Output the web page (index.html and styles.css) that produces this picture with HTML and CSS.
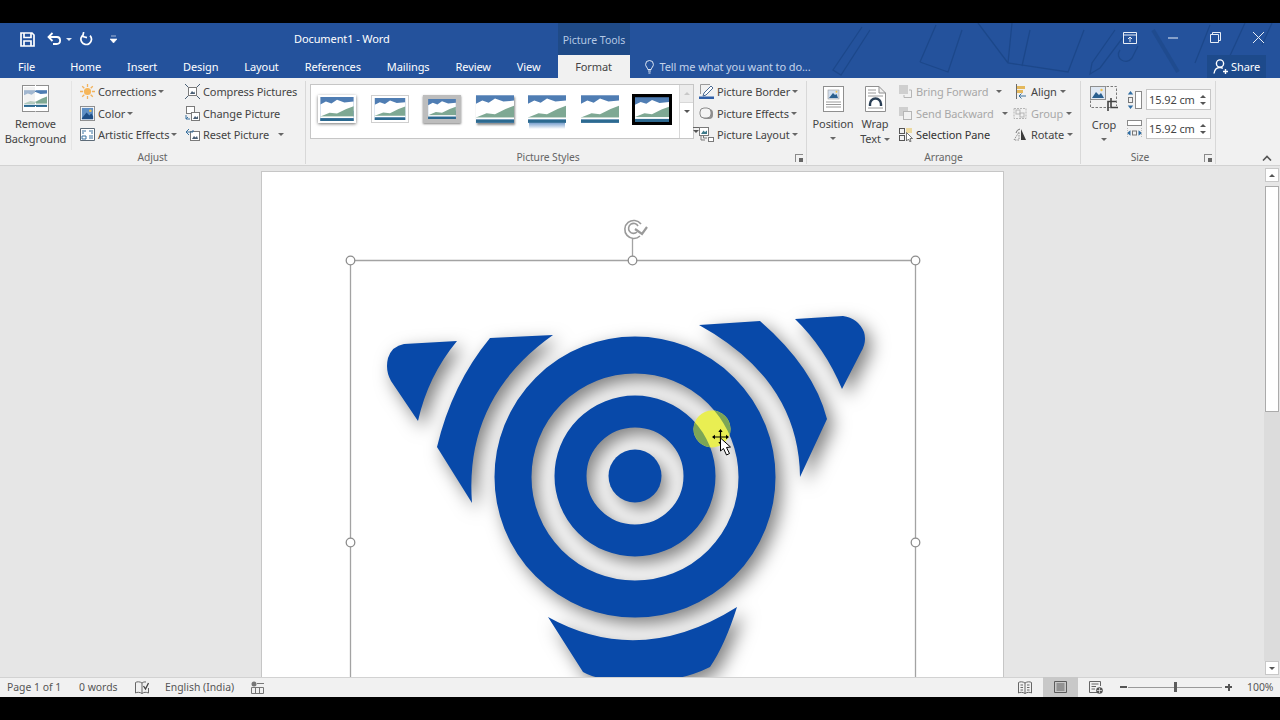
FILE: index.html
```html
<!DOCTYPE html>
<html lang="en">
<head>
  <meta charset="UTF-8" />
  <title>Document1 - Word</title>
  <link rel="stylesheet" href="styles.css">
</head>
<body>

  <svg class="sprite" xmlns="http://www.w3.org/2000/svg">
    <symbol id="pic" viewBox="0 0 36 26">
      <rect width="36" height="26" fill="#4f7db3"/>
      <path d="M0 8 L6 5 L12 7 L18 3 L26 6 L36 5 V15 L24 18 L12 20 L0 22Z" fill="#fff"/>
      <path d="M0 21 L10 17 L18 18 L28 13 L36 10 V22 H0Z" fill="#7ea893"/>
      <rect y="21" width="36" height="2" fill="#fff"/>
      <rect y="23" width="36" height="3" fill="#2c6a90"/>
    </symbol>
    <symbol id="mini" viewBox="0 0 16 16">
      <rect x=".5" y=".5" width="15" height="15" fill="#fff" stroke="#8a8a8a"/>
      <rect x="2" y="2" width="12" height="12" fill="#5f8fc4"/>
      <path d="M2 13 L7 7 L10 10 L12 8 L14 11 V14 H2Z" fill="#1f4e86"/>
      <circle cx="11" cy="5" r="1.4" fill="#f2c14e"/>
    </symbol>
  </svg>

  <div class="letterbox"></div>

  <div class="chrome">
    <svg class="doodles" width="480" height="55" viewBox="800 23 480 55">
      <g fill="none" stroke="#17417f" stroke-width="1.3" opacity=".6">
        <path d="M862 27 L833 70 L841 75 L870 30"/>
        <path d="M920 62 L936 25 M920 62 L948 72 L962 30"/>
        <path d="M978 23 L1008 63 M1012 23 L1008 63 L1068 72 L1084 30"/>
        <path d="M1030 30 L1022 66"/>
        <path d="M1115 30 L1092 63 L1090 74 L1100 68 L1124 36"/>
        <path d="M1120 50 C1114 58 1126 66 1132 58 L1138 46"/>
        <path d="M1153 30 L1178 72" stroke-width="4" stroke="#1c4788"/>
        <path d="M1195 63 L1210 25 M1245 23 L1228 60 M1272 23 L1262 45"/>
      </g>
    </svg>
    <header class="titlebar">
      <div class="qat">
        <svg class="qat-ico" width="15" height="15" viewBox="0 0 15 15"><path d="M1 1 H12 L14 3 V14 H1Z M4 1.5 V5.5 H11 V1.5 M4 14 V9 H11 V14" fill="none" stroke="#fff" stroke-width="1.7"/></svg>
        <svg class="qat-ico undo" width="16" height="15" viewBox="0 0 16 15"><path d="M2 5 H10 C14 5 14.5 12 9.5 12 H6 M5.5 1 L1.5 5 L5.5 9" fill="none" stroke="#fff" stroke-width="1.8"/></svg>
        <span class="caret white"></span>
        <svg class="qat-ico redo" width="15" height="15" viewBox="0 0 15 15"><path d="M10 2.8 A5.3 5.3 0 1 1 4 3 M3 1 V5.5 H7.5" fill="none" stroke="#fff" stroke-width="1.7" transform="rotate(14 7.5 7.5)"/></svg>
        <svg class="qat-ico more" width="7" height="8" viewBox="0 0 7 8"><path d="M1 1 H6 M0 4 H7 L3.5 8Z" fill="#fff" stroke="#fff" stroke-width=".6"/></svg>
      </div>
      <div class="doc-title">Document1 - Word</div>
      <div class="context-title">Picture Tools</div>
      <div class="win-controls">
        <span class="win-btn"><svg width="14" height="12" viewBox="0 0 14 12"><path d="M.5 .5 H13.5 V11.5 H.5Z M.5 3 H13.5 M7 10 V5 M5 7 L7 5 L9 7" fill="none" stroke="#e8eef7"/></svg></span>
        <span class="win-btn"><svg width="10" height="10" viewBox="0 0 10 10"><path d="M0 5 H10" stroke="#e8eef7"/></svg></span>
        <span class="win-btn"><svg width="11" height="11" viewBox="0 0 11 11"><path d="M.5 2.5 H8.5 V10.5 H.5Z M2.5 2.5 V.5 H10.5 V8.5 H8.5" fill="none" stroke="#e8eef7"/></svg></span>
        <span class="win-btn"><svg width="11" height="11" viewBox="0 0 11 11"><path d="M0 0 L11 11 M11 0 L0 11" stroke="#e8eef7"/></svg></span>
      </div>
    </header>

    <nav class="tabs">
      <a class="tab tab-file">File</a>
      <a class="tab">Home</a>
      <a class="tab">Insert</a>
      <a class="tab">Design</a>
      <a class="tab">Layout</a>
      <a class="tab">References</a>
      <a class="tab">Mailings</a>
      <a class="tab">Review</a>
      <a class="tab">View</a>
      <a class="tab tab-active">Format</a>
      <div class="tell-me">
        <svg width="9" height="14" viewBox="0 0 9 14"><path d="M2.8 9.5 C2.5 7.5 .6 6.6 .6 4.4 A3.9 3.9 0 0 1 8.4 4.4 C8.4 6.6 6.5 7.5 6.2 9.5Z M3 11 H6 M3.4 13 H5.6" fill="none" stroke="#dfe8f5"/></svg>
        <span>Tell me what you want to do...</span>
      </div>
      <div class="share">
        <svg width="15" height="15" viewBox="0 0 15 15"><circle cx="7" cy="4.5" r="3.6" fill="none" stroke="#fff" stroke-width="1.4"/><path d="M1 14.5 C1.5 10.5 4 8.5 7 8.5 C8 8.5 9 8.8 9.8 9.3 M10 12.5 H15 M12.5 10 V15" fill="none" stroke="#fff" stroke-width="1.4"/></svg>
        <span>Share</span>
      </div>
    </nav>
  </div>

  <section class="ribbon">

    <div class="group group-adjust">
      <div class="group-body">
        <div class="big-btn big-remove">
          <svg width="27" height="27" viewBox="0 0 27 27">
            <rect x=".5" y=".5" width="26" height="26" fill="#fff" stroke="#8f8f8f"/>
            <use href="#pic" x="2" y="2" width="23" height="23"/>
            <rect x="2" y="2" width="11" height="16" fill="#e8e8e8" opacity=".55"/>
            <path d="M13.5 0 V27" stroke="#fff" stroke-dasharray="2 1.5"/>
          </svg>
          <span>Remove</span>
          <span>Background</span>
        </div>
        <div class="tool-col col-corrections">
          <div class="tool">
            <svg width="15" height="15" viewBox="0 0 15 15"><circle cx="7.5" cy="7.5" r="3.6" fill="#f6b65a"/><path d="M7.5 0 V3 M7.5 12 V15 M0 7.5 H3 M12 7.5 H15 M2.2 2.2 L4.3 4.3 M10.7 10.7 L12.8 12.8 M2.2 12.8 L4.3 10.7 M10.7 4.3 L12.8 2.2" stroke="#f2b25c" stroke-width="1.3"/></svg>
            <span>Corrections</span><i class="caret"></i>
          </div>
          <div class="tool">
            <svg width="15" height="15"><use href="#mini"/></svg>
            <span>Color</span><i class="caret"></i>
          </div>
          <div class="tool">
            <svg width="15" height="15" viewBox="0 0 15 15"><path d="M.5 1.5 H14.5 V13.5 H.5Z" fill="#fff" stroke="#5d6b78"/><path d="M2 4 H6 M2 6 H4 M9 4 H13 M11 6 H13 M2 9 H6 V12 H2Z M9 9 H13 M9 11 H13" stroke="#38719f" fill="none"/></svg>
            <span>Artistic Effects</span><i class="caret"></i>
          </div>
        </div>
        <div class="tool-col">
          <div class="tool">
            <svg width="15" height="15" viewBox="0 0 15 15"><rect x="3.5" y="3.5" width="8" height="8" fill="#fff" stroke="#7a7a7a"/><path d="M5 10 L7 7 L8.5 8.5 L9.5 7.5 L10 10Z" fill="#4a5f75"/><path d="M0 0 L3 3 M15 0 L12 3 M0 15 L3 12 M15 15 L12 12" stroke="#4a5f75"/></svg>
            <span>Compress Pictures</span>
          </div>
          <div class="tool">
            <svg width="15" height="15" viewBox="0 0 15 15"><rect x="1.5" y=".5" width="8" height="7" fill="#fff" stroke="#7a7a7a"/><rect x="6.5" y="6.5" width="8" height="8" fill="#fff" stroke="#7a7a7a"/><path d="M8 13 L10 10 L11.5 11.5 L13 10 V13Z" fill="#4a5f75"/><path d="M1 9 V13 H5 M3 11 L1 13" fill="none" stroke="#38719f"/></svg>
            <span>Change Picture</span>
          </div>
          <div class="tool">
            <svg width="15" height="15" viewBox="0 0 15 15"><rect x="5.5" y="4.5" width="9" height="9" fill="#fff" stroke="#7a7a7a"/><path d="M7 12 L9 9 L10.5 10.5 L12 9 L13 12Z" fill="#4a5f75"/><path d="M1 5 H8 V3 M1 5 L4 2 M1 5 L4 8" fill="none" stroke="#38719f"/></svg>
            <span>Reset Picture</span><i class="caret caret-far"></i>
          </div>
        </div>
      </div>
      <div class="group-label">Adjust</div>
    </div>

    <div class="group group-styles">
      <div class="group-body">
        <div class="gallery">
          <div class="thumbs">
            <div class="slot"><svg class="thumb thumb-frame"><use href="#pic"/></svg></div>
            <div class="slot"><svg class="thumb thumb-thin"><use href="#pic"/></svg></div>
            <div class="slot"><svg class="thumb thumb-grey"><use href="#pic"/></svg></div>
            <div class="slot"><svg class="thumb thumb-shadow"><use href="#pic"/></svg></div>
            <div class="slot"><svg class="thumb thumb-plain"><use href="#pic"/></svg><div class="reflection"></div></div>
            <div class="slot"><svg class="thumb thumb-plain"><use href="#pic"/></svg></div>
            <div class="slot"><svg class="thumb thumb-black"><use href="#pic"/></svg></div>
          </div>
          <div class="gallery-scroll">
            <span class="up"><i class="tri tri-up"></i></span>
            <span><i class="tri"></i></span>
            <span class="more"><i class="bar"></i><i class="tri"></i></span>
          </div>
        </div>
        <div class="tool-col col-picture">
          <div class="tool">
            <svg width="15" height="15" viewBox="0 0 15 15"><path d="M1.5 .5 H11 M1.5 .5 V10" fill="none" stroke="#9a9a9a"/><path d="M5 9 L12 2 L14 4 L7 11 L4 12Z" fill="#fff" stroke="#4b6b94"/><rect y="12.5" width="15" height="2.5" fill="#2f5fa8"/></svg>
            <span>Picture Border</span><i class="caret"></i>
          </div>
          <div class="tool">
            <svg width="15" height="15" viewBox="0 0 15 15"><rect x="3" y="3" width="11" height="10" rx="4" fill="#8f8f8f"/><rect x="1" y="2" width="11" height="10" rx="4" fill="#f4f4f4" stroke="#8a8a8a"/></svg>
            <span>Picture Effects</span><i class="caret"></i>
          </div>
          <div class="tool">
            <svg width="15" height="15" viewBox="0 0 15 15"><rect x=".5" y=".5" width="9" height="8" fill="#fff" stroke="#7a7a7a"/><path d="M2 7 L4.5 3.5 L6 5 L8 3.5 V7Z" fill="#3d7a8a"/><path d="M2 9 V13 H6 M4.5 9 V11 H8" fill="none" stroke="#7a7a7a"/><rect x="9.5" y="10.5" width="5" height="4" fill="#fff" stroke="#7a7a7a"/></svg>
            <span>Picture Layout</span><i class="caret"></i>
          </div>
        </div>
      </div>
      <div class="group-label label-shifted">Picture Styles</div>
      <span class="launcher"></span>
    </div>

    <div class="group group-arrange">
      <div class="group-body">
        <div class="big-btn big-position">
          <svg width="21" height="26" viewBox="0 0 21 26"><rect x=".5" y=".5" width="20" height="25" fill="#fff" stroke="#8f8f8f"/><rect x="5" y="4" width="11" height="9" fill="#d3dfee" stroke="#9a9a9a" stroke-width=".6"/><path d="M6 12 L10 7 L12 9 L13.5 8 L15 12Z" fill="#2a5f8f"/><circle cx="13.5" cy="5.8" r="1" fill="#f2c14e"/><path d="M3 16 H18 M3 18.5 H18 M3 21 H18" stroke="#9a9a9a"/></svg>
          <span>Position</span>
          <i class="caret caret-line"></i>
        </div>
        <div class="big-btn big-wrap">
          <svg width="21" height="26" viewBox="0 0 21 26"><path d="M.5 .5 H14 L20.5 7 V25.5 H.5Z M14 .5 V7 H20.5" fill="#fff" stroke="#8f8f8f"/><path d="M3 4 H11 M3 7 H11 M3 10 H18 M3 22 H18" stroke="#9a9a9a"/><path d="M5 20 V18 A5.5 5.5 0 0 1 16 18 V20" fill="none" stroke="#2a3f55" stroke-width="2.4"/></svg>
          <span>Wrap</span>
          <span>Text<i class="caret caret-text"></i></span>
        </div>
        <div class="tool-col col-order">
          <div class="tool disabled">
            <svg width="13" height="15" viewBox="0 0 13 15"><rect y="1" width="9" height="9" fill="#cfcfcf"/><path d="M10 6 H12.5 V13.5 H5 V11" fill="none" stroke="#b5b5b5"/></svg>
            <span class="order-label">Bring Forward</span><i class="caret"></i>
          </div>
          <div class="tool disabled">
            <svg width="13" height="15" viewBox="0 0 13 15"><rect y="1" width="9" height="9" fill="#cfcfcf"/><rect x="4.5" y="5.5" width="8" height="8" fill="#f1f1f1" stroke="#b5b5b5"/></svg>
            <span class="order-label">Send Backward</span><i class="caret"></i>
          </div>
          <div class="tool">
            <svg width="14" height="15" viewBox="0 0 14 15"><rect x=".5" y="1.5" width="5" height="5" fill="none" stroke="#555"/><rect x=".5" y="8.5" width="5" height="5" fill="none" stroke="#555"/><rect x="7" y="1" width="6" height="5" fill="#ecd9a0"/><path d="M7.5 5.5 V14 L9.5 12 L11 15 L12 14.5 L11 11.5 H13.5Z" fill="#fff" stroke="#555" stroke-width=".8"/></svg>
            <span class="pane-label">Selection Pane</span>
          </div>
        </div>
        <div class="tool-col col-align">
          <div class="tool">
            <svg width="14" height="15" viewBox="0 0 14 15"><path d="M3.5 0 V15" stroke="#6a6a6a"/><rect x="4" y="2" width="8" height="3" fill="#e4b85c"/><rect x="4" y="6" width="6" height="3" fill="#e4b85c"/><path d="M13 12 H6 M8.5 9.5 L6 12 L8.5 14.5" fill="none" stroke="#38719f"/></svg>
            <span>Align</span><i class="caret"></i>
          </div>
          <div class="tool disabled">
            <svg width="14" height="15" viewBox="0 0 14 15"><path d="M1 2.5 H13 V12.5 H1Z" fill="none" stroke="#b5b5b5" stroke-dasharray="2 1"/><rect x="3" y="4" width="4" height="4" fill="none" stroke="#b5b5b5"/><rect x="7" y="7" width="4" height="4" fill="none" stroke="#b5b5b5"/></svg>
            <span>Group</span><i class="caret"></i>
          </div>
          <div class="tool">
            <svg width="14" height="15" viewBox="0 0 14 15"><path d="M1 13 L6 5 V13Z" fill="none" stroke="#8a8a8a" stroke-dasharray="1.5 1"/><path d="M8 2 L13 13 H8Z" fill="#3c3c3c"/><path d="M3 6 A5 5 0 0 1 7 2" fill="none" stroke="#777"/></svg>
            <span>Rotate</span><i class="caret"></i>
          </div>
        </div>
      </div>
      <div class="group-label">Arrange</div>
    </div>

    <div class="group group-size">
      <div class="group-body">
        <div class="big-btn big-crop">
          <svg width="29" height="27" viewBox="0 0 29 27"><path d="M.5 .5 H26.5 V20 M24 21.5 H.5 V.5" fill="none" stroke="#7a7a7a" stroke-dasharray="2.5 1.5"/><rect x=".5" y=".5" width="15" height="13" fill="#dfe8f3" stroke="#8f8f8f"/><path d="M2 12 L6 6 L9 9 L11 7 L14 12Z" fill="#2a5f8f"/><circle cx="11.5" cy="4" r="1.2" fill="#f2c14e"/><path d="M19 27 V17.5 H27 M22 14 V23.5 H29" fill="none" stroke="#444" stroke-width="1.6" transform="translate(-1 -2)"/></svg>
          <span>Crop</span>
          <i class="caret caret-line"></i>
        </div>
        <div class="spin-col">
          <div class="spin-row">
            <svg width="15" height="18" viewBox="0 0 15 18"><rect x="8.5" y=".5" width="6" height="17" fill="#fff" stroke="#8a8a8a"/><path d="M3.5 0 L.8 3.5 H6.2Z M3.5 18 L.8 14.5 H6.2Z" fill="#2f6da3"/><rect x="1.5" y="6.5" width="4" height="5" fill="none" stroke="#777"/></svg>
            <div class="spin-input"><span>15.92 cm</span><div class="spin-arrows"><i class="tri tri-up"></i><i class="tri"></i></div></div>
          </div>
          <div class="spin-row">
            <svg width="15" height="18" viewBox="0 0 15 18"><rect x=".5" y=".5" width="14" height="5" fill="#fff" stroke="#8a8a8a"/><path d="M0 13 L3.5 10.3 V15.7Z M15 13 L11.5 10.3 V15.7Z" fill="#2f6da3"/><rect x="5.5" y="11" width="4" height="4" fill="none" stroke="#777"/><path d="M.5 8 V17 M14.5 8 V17" stroke="#bbb" stroke-dasharray="1 1"/></svg>
            <div class="spin-input"><span>15.92 cm</span><div class="spin-arrows"><i class="tri tri-up"></i><i class="tri"></i></div></div>
          </div>
        </div>
      </div>
      <div class="group-label label-shifted">Size</div>
      <span class="launcher"></span>
    </div>

    <div class="group-end">
      <svg width="10" height="6" viewBox="0 0 10 6"><path d="M1 5.5 L5 1.5 L9 5.5" fill="none" stroke="#555" stroke-width="1.6"/></svg>
    </div>
  </section>

  <main class="workspace">
    <div class="page">
      <!-- viewBox is in window pixels so the points can be read straight off the picture -->
      <svg class="canvas" width="741" height="505" viewBox="262 172 741 505">
        <defs>
          <clipPath id="spot"><circle cx="712" cy="429" r="18.5"/></clipPath>
        </defs>
        <g class="logo">
          <circle cx="635" cy="477" r="122" fill="none" stroke="#0849a9" stroke-width="37"/>
          <circle cx="635" cy="476" r="64.5" fill="none" stroke="#0849a9" stroke-width="32"/>
          <circle cx="635" cy="476" r="26.5" fill="#0849a9"/>
          <path fill="#0849a9" d="M457 341 L404 344 Q392 346 388 358 Q385 370 391 381 L418 421 Q428 376 457 341Z"/>
          <path fill="#0849a9" d="M553 335 L490 338 Q452 384 437 447 L472 503 Q464 398 553 335Z"/>
          <path fill="#0849a9" d="M699 325 L760 321 Q814 368 827 419 L800 477 Q799 380 699 325Z"/>
          <path fill="#0849a9" d="M795 319 L843 316 Q858 318 864 332 Q867 342 861 352 L842 389 Q825 348 795 319Z"/>
          <path fill="#0849a9" d="M548 617 Q640 668 737 607 Q725 645 710 667 Q680 682 640 682 Q600 682 583 672Z"/>
        </g>
        <circle cx="712" cy="429" r="18.5" fill="#e9ee52"/>
        <g clip-path="url(#spot)" fill="none" stroke="#7ca557">
          <circle cx="635" cy="477" r="122" stroke-width="37"/>
          <circle cx="635" cy="476" r="64.5" stroke-width="32"/>
        </g>

        <path d="M350.5 260.5 H915.5 M350.5 260.5 V677 M915.5 260.5 V677 M632.5 260 V238" fill="none" stroke="#a3a3a3" stroke-width="1.3"/>
        <g fill="#fff" stroke="#8d8d8d" stroke-width="1.3">
          <circle cx="350.5" cy="260.5" r="4.3"/>
          <circle cx="632.5" cy="260.5" r="4.3"/>
          <circle cx="915.5" cy="260.5" r="4.3"/>
          <circle cx="350.5" cy="542.5" r="4.3"/>
          <circle cx="915.5" cy="542.5" r="4.3"/>
        </g>
        <g fill="none" stroke="#9a9a9a" stroke-width="1.6">
          <path d="M640 236 A9 9 0 1 1 641 224"/>
          <path d="M637 232 A5 5 0 1 1 638 226"/>
          <path d="M647 227 L642 234 L635 229" stroke-width="2.2"/>
        </g>

        <path d="M720.5 430 V444 M713 437 H728" stroke="#000" stroke-width="1.2"/>
        <path d="M720.5 429 L718.3 432 H722.7Z M720.5 445 L718.3 442 H722.7Z M712 437 L715 434.8 V439.2Z M729 437 L726 434.8 V439.2Z" fill="#000"/>
        <path d="M720.5 438 V451 L723.5 448.5 L726.5 455 L729.5 453.5 L726.5 447.5 L730.5 447Z" fill="#fff" stroke="#000"/>
      </svg>
    </div>
    <aside class="scrollbar">
      <span class="sb-btn"><i class="tri tri-up"></i></span>
      <span class="sb-thumb"></span>
      <span class="sb-track"></span>
      <span class="sb-btn"><i class="tri"></i></span>
    </aside>
  </main>

  <footer class="statusbar">
    <span class="st-page">Page 1 of 1</span>
    <span class="st-words">0 words</span>
    <svg class="st-proof" width="14" height="13" viewBox="0 0 14 13"><path d="M7 2 C5 .5 2 .5 .5 1.5 V12 C2 11 5 11 7 12.5 C9 11 11 11 13.5 12 V7 M7 2 V12.5 M7 2 C8 1 9.5 .8 11 1" fill="none" stroke="#666"/><path d="M8.5 5 L10.5 8 L13.5 2" fill="none" stroke="#444" stroke-width="1.3"/></svg>
    <span class="st-lang">English (India)</span>
    <svg class="st-macro" width="13" height="13" viewBox="0 0 13 13"><circle cx="3" cy="3" r="2.5" fill="#777"/><path d="M6 2.5 H13 M.5 6.5 H12.5 V12.5 H.5Z M4.5 6.5 V12.5 M8.5 6.5 V12.5" fill="none" stroke="#777"/></svg>
    <div class="st-right">
      <svg class="st-read" width="14" height="13" viewBox="0 0 14 13"><path d="M7 2 C5 .5 2 .5 .5 1.5 V12 C2 11 5 11 7 12.5 C9 11 12 11 13.5 12 V1.5 C12 .5 9 .5 7 2Z M7 2 V12.5 M2.5 4 H5 M2.5 6.5 H5 M2.5 9 H5 M9 4 H11.5 M9 6.5 H11.5 M9 9 H11.5" fill="none" stroke="#666"/></svg>
      <span class="st-print"><svg width="13" height="12" viewBox="0 0 13 12"><path d="M.5 .5 H12.5 V11.5 H.5Z M2.5 3 H10.5 M2.5 5 H10.5 M2.5 7 H10.5 M2.5 9 H10.5" fill="none" stroke="#5c5c5c"/></svg></span>
      <svg class="st-web" width="14" height="13" viewBox="0 0 14 13"><path d="M8 11.5 H.5 V.5 H11.5 V5 M2.5 3 H9.5 M2.5 5.5 H7 M2.5 8 H6" fill="none" stroke="#666"/><circle cx="10.5" cy="9.5" r="3.3" fill="#555"/><path d="M8 9.5 H13 M10.5 7 V12" stroke="#eee" stroke-width=".7"/></svg>
      <span class="zoom-minus"></span>
      <div class="zoom-slider"><span class="zoom-thumb"></span></div>
      <span class="zoom-plus"></span>
      <span class="zoom-val">100%</span>
    </div>
  </footer>

  <div class="letterbox"></div>

</body>
</html>
```

FILE: styles.css
```css
* {
  margin: 0;
  padding: 0;
  box-sizing: border-box;
}
body {
  width: 1280px;
  height: 720px;
  overflow: hidden;
  display: flex;
  flex-direction: column;
  background: #000;
  font-family: "Noto Sans", "Open Sans", sans-serif;
  font-size: 11px;
  letter-spacing: -0.1px;
  color: #444;
}
svg {
  display: block;
  flex: none;
}
i {
  display: inline-block;
}
.sprite {
  display: none;
}
.letterbox {
  height: 23px;
  flex: none;
  background: #000;
}

/* title bar and tabs share the blue and the doodles */
.chrome {
  position: relative;
  flex: none;
  background: #24529c;
  color: #fff;
}
.doodles {
  position: absolute;
  top: 0;
  right: 0;
}
.titlebar {
  position: relative;
  height: 32px;
  display: flex;
  align-items: stretch;
}
.qat {
  width: 294px;
  display: flex;
  align-items: center;
  padding-left: 20px;
}
.undo {
  margin-left: 12px;
}
.redo {
  margin-left: 7px;
}
.more {
  margin-left: 16px;
}
.doc-title {
  width: 264px;
  line-height: 32px;
}
.context-title {
  width: 72px;
  background: #1f4a87;
  color: #b4c8e4;
  font-size: 10.5px;
  letter-spacing: 0;
  text-align: center;
  line-height: 34px;
}
.win-controls {
  margin-left: auto;
  display: flex;
}
.win-btn {
  width: 43px;
  display: flex;
  align-items: center;
  justify-content: center;
  padding-bottom: 3px;
}
.tabs {
  position: relative;
  height: 23px;
  display: flex;
}
.tab {
  padding: 0 13px;
  line-height: 23px;
}
.tab-file {
  padding: 0 18px;
  margin-right: 4px;
}
.tab-active {
  margin-left: 4px;
  padding: 0;
  background: #f1f1f1;
  color: #444;
  width: 72px;
  text-align: center;
}
.tell-me {
  display: flex;
  align-items: center;
  gap: 6px;
  margin-left: 15px;
  color: #c3d3ea;
}
.share {
  margin-left: auto;
  margin-right: 14px;
  width: 59px;
  background: #1d4a8b;
  display: flex;
  align-items: center;
  gap: 3px;
  padding-left: 6px;
}

/* ribbon */
.ribbon {
  height: 88px;
  flex: none;
  display: flex;
  background: #f1f1f1;
  border-bottom: 1px solid #d2d2d2;
}
.group {
  position: relative;
  margin: 3px 0 1px;
  display: flex;
  flex-direction: column;
  border-right: 1px solid #d8d8d8;
  flex: none;
}
.group-adjust {
  width: 306px;
}
.group-styles {
  width: 501px;
}
.group-arrange {
  width: 274px;
}
.group-size {
  width: 135px;
}
.group-body {
  display: flex;
  height: 69px;
}
.group-label {
  height: 14px;
  line-height: 14px;
  text-align: center;
  font-size: 10.3px;
  color: #666;
}
.label-shifted {
  padding-right: 16px;
}
.group-end {
  flex: 1;
  display: flex;
  justify-content: flex-end;
  align-items: flex-end;
  padding: 0 8px 4px 0;
}
.launcher {
  position: absolute;
  right: 3px;
  bottom: 2px;
  width: 8px;
  height: 8px;
  border: 1px solid #8a8a8a;
  border-width: 1px 0 0 1px;
}
.launcher::after {
  content: "";
  position: absolute;
  right: 0;
  bottom: 0;
  width: 4px;
  height: 4px;
  background: #666;
}
.big-btn {
  display: flex;
  flex-direction: column;
  align-items: center;
  padding-top: 4px;
  line-height: 15px;
  white-space: nowrap;
  flex: none;
}
.big-btn svg {
  margin-bottom: 4px;
}
.big-remove {
  width: 72px;
  border-right: 1px solid #e4e4e4;
}
.big-position,
.big-wrap,
.big-crop {
  padding-top: 5px;
}
.big-position {
  width: 52px;
}
.big-wrap {
  width: 32px;
}
.big-crop {
  width: 46px;
}
.tool-col {
  display: flex;
  flex-direction: column;
  flex: none;
}
.col-corrections {
  width: 113px;
  padding-left: 8px;
}
.tool {
  height: 21.5px;
  display: flex;
  align-items: center;
  gap: 3px;
  white-space: nowrap;
}
.disabled {
  color: #a8a8a8;
}
.caret {
  width: 0;
  height: 0;
  margin-left: -1px;
  border-left: 3px solid transparent;
  border-right: 3px solid transparent;
  border-top: 3px solid #666;
}
.caret.white {
  margin-left: 3px;
  border-top-color: #dfe8f5;
}
.caret-far {
  margin-left: 6px;
}
.caret-line {
  margin: 6px 0 0;
}
.caret-text {
  margin-left: 3px;
  vertical-align: 2px;
}

/* picture styles gallery */
.gallery {
  margin: 3px 0 0 4px;
  height: 55px;
  width: 384px;
  flex: none;
  display: flex;
  background: #fff;
  border: 1px solid #c6c6c6;
}
.thumbs {
  width: 369px;
  display: flex;
}
.slot {
  width: 52.5px;
  flex: none;
  padding-top: 10px;
  display: flex;
  flex-direction: column;
  align-items: center;
}
.thumb {
  width: 38px;
  height: 28px;
}
.thumb-frame {
  padding: 2px;
  background: #fff;
  box-shadow: 0 1px 3px rgba(0, 0, 0, 0.55);
}
.thumb-thin {
  padding: 2px;
  background: #fff;
  border: 1px solid #cfcfcf;
}
.thumb-grey {
  padding: 4px;
  background: #bdbdbd;
  box-shadow: 0 1px 2px rgba(0, 0, 0, 0.5);
}
.thumb-shadow {
  box-shadow: 1px 2px 2px rgba(0, 0, 0, 0.45);
}
.thumb-black {
  width: 40px;
  height: 31px;
  margin-top: -1px;
  padding: 3px;
  background: #000;
}
.reflection {
  width: 36px;
  height: 6px;
  background: linear-gradient(#7da3cf, #fff);
}
.gallery-scroll {
  width: 14px;
  flex: none;
  display: flex;
  flex-direction: column;
  border-left: 1px solid #d8d8d8;
}
.gallery-scroll span {
  flex: 1;
  display: flex;
  flex-direction: column;
  gap: 2px;
  align-items: center;
  justify-content: center;
  border-top: 1px solid #d8d8d8;
}
.gallery-scroll .up {
  background: #ececec;
  border-top: 0;
}
.gallery-scroll .up .tri-up {
  border-bottom-color: #c8c8c8;
}
.bar {
  width: 7px;
  height: 1px;
  background: #666;
}
.tri {
  width: 0;
  height: 0;
  border-left: 3px solid transparent;
  border-right: 3px solid transparent;
  border-top: 3px solid #555;
}
.tri-up {
  border-top: 0;
  border-bottom: 3px solid #555;
}
.col-picture {
  margin-left: 5px;
}

/* arrange */
.col-order {
  width: 114px;
  margin-left: 8px;
}
.order-label {
  margin-left: 1px;
}
.pane-label {
  color: #333;
}
.col-order .caret {
  margin-left: 5px;
}
.col-align .tool {
  gap: 4px;
}

/* size */
.spin-col {
  padding-top: 8px;
  display: flex;
  flex-direction: column;
  gap: 8px;
}
.spin-row {
  display: flex;
  align-items: center;
  gap: 4px;
}
.spin-input {
  width: 65px;
  height: 21px;
  background: #fff;
  border: 1px solid #c6c6c6;
  display: flex;
  align-items: center;
  justify-content: space-between;
  padding: 0 4px 0 2px;
}
.spin-arrows {
  display: flex;
  flex-direction: column;
  gap: 4px;
}

/* document */
.workspace {
  flex: 1;
  min-height: 0;
  display: flex;
  background: #e6e6e6;
  overflow: hidden;
}
.page {
  margin: 6px 0 0 262px;
  width: 741px;
  height: 505px;
  background: #fff;
  box-shadow: 0 0 0 1px #c6c6c6;
  flex: none;
}
.canvas {
  overflow: hidden;
}
.logo {
  filter: drop-shadow(6px 7px 9px rgba(0, 0, 0, 0.5));
}
.scrollbar {
  margin: 2px 1px 2px auto;
  width: 14px;
  display: flex;
  flex-direction: column;
}
.sb-btn {
  height: 14px;
  flex: none;
  background: #fff;
  border: 1px solid #c8c8c8;
  display: flex;
  align-items: center;
  justify-content: center;
}
.sb-thumb {
  height: 226px;
  margin-top: 4px;
  flex: none;
  background: #fff;
  border: 1px solid #ababab;
}
.sb-track {
  flex: 1;
  margin: 0 -1px;
  background: #dcdcdc;
}

/* status bar */
.statusbar {
  height: 20px;
  flex: none;
  display: flex;
  align-items: center;
  padding-bottom: 1px;
  background: #f1f1f1;
  border-top: 1px solid #d2d2d2;
  font-size: 10.4px;
  letter-spacing: 0;
  color: #555;
  white-space: nowrap;
}
.st-page {
  width: 79px;
  padding-left: 7px;
}
.st-words {
  width: 56px;
}
.st-proof {
  margin-right: 16px;
}
.st-lang {
  width: 86px;
}
.st-right {
  margin-left: auto;
  display: flex;
  align-items: center;
  height: 100%;
}
.st-read {
  margin-right: 11px;
}
.st-print {
  width: 35px;
  height: 20px;
  background: #c8c8c8;
  display: flex;
  align-items: center;
  justify-content: center;
  margin-right: 11px;
}
.st-web {
  margin-right: 17px;
}
.zoom-minus {
  width: 7px;
  height: 2px;
  background: #555;
}
.zoom-slider {
  position: relative;
  width: 94px;
  height: 1px;
  margin: 0 3px 0 1px;
  background: #9a9a9a;
}
.zoom-thumb {
  position: absolute;
  left: 46px;
  top: -5px;
  width: 3px;
  height: 10px;
  background: #5c5c5c;
}
.zoom-plus {
  position: relative;
  width: 7px;
  height: 2px;
  background: #555;
}
.zoom-plus::after {
  content: "";
  position: absolute;
  left: 2.5px;
  top: -2.5px;
  width: 2px;
  height: 7px;
  background: #555;
}
.zoom-val {
  width: 33px;
  margin-left: 15px;
}
```
